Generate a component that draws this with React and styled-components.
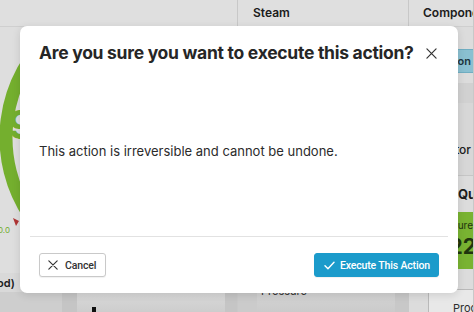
import styled, { createGlobalStyle } from "styled-components";

const GlobalStyle = createGlobalStyle`
  html, body {
    margin: 0;
    padding: 0;
    width: 474px;
    height: 312px;
    overflow: hidden;
    font-family: Inter, "Liberation Sans", sans-serif;
  }
`;

const Screen = styled.div`
  position: relative;
  width: 474px;
  height: 312px;
  overflow: hidden;
`;

const Dashboard = styled.div`
  display: grid;
  grid-template-columns: 238px 171px 1fr;
  height: 312px;
  background: #f2f2f2;
  color: #222;
`;

const Column = styled.div`
  display: flex;
  flex-direction: column;
  min-width: 0;
  border-right: 1px solid #dcdcdc;
  overflow: hidden;
`;

const HeaderCell = styled.div`
  height: 26px;
  flex: none;
  padding-left: ${(p) => p.$indent || 15}px;
  font-size: 12px;
  font-weight: 600;
  line-height: 26px;
  white-space: nowrap;
  background: #f6f6f6;
  border-bottom: 1px solid #e4e4e4;
`;

const GaugePanel = styled.div`
  flex: 1;
  display: flex;
  flex-direction: column;
  background: #f4f4f4;
`;

const StatusRow = styled.div`
  height: 22px;
  display: flex;
  align-items: center;
  font-size: 11px;
  font-weight: 600;
  background: #efefef;
  span {
    margin-left: -22px;
  }
`;

const CardStrip = styled.div`
  height: ${(p) => p.$h || 20}px;
  display: grid;
  grid-template-columns: ${(p) => p.$cols};
`;

const StripCell = styled.div`
  background: ${(p) => p.$bg};
  font-size: 11px;
  color: #333;
  padding: 0 0 0 4px;
  overflow: hidden;
  white-space: nowrap;
`;

const StripLabel = styled.div`
  margin-top: 14px;
`;

const Mark = styled.div`
  width: 4px;
  height: 6px;
  margin: 15px 0 0 11px;
  background: #111;
`;

const SteamBody = styled.div`
  flex: 1;
  background: #f3f3f3;
`;

const SideBody = styled.div`
  flex: 1;
  display: flex;
  flex-direction: column;
  background: #f2f2f2;
`;

const ToggleButton = styled.div`
  margin-top: 22px;
  height: 22px;
  background: #98d3e6;
  border: 1px solid #7cc0d6;
  border-right: none;
  font-size: 11px;
  font-weight: 600;
  line-height: 22px;
  text-align: right;
  padding-right: 2px;
  color: #1f3b45;
`;

const GreySection = styled.div`
  height: ${(p) => p.$h}px;
  background: ${(p) => p.$bg || "#e9e9e9"};
  border-bottom: ${(p) => (p.$line ? "1px solid #dadada" : "none")};
  display: flex;
  align-items: ${(p) => p.$align || "center"};
  justify-content: ${(p) => (p.$start ? "flex-start" : "flex-end")};
  padding: ${(p) => (p.$start ? "0 0 0 49px" : "0 2px 0 0")};
  font-size: ${(p) => p.$fs || 11}px;
  font-weight: ${(p) => p.$fw || 500};
  white-space: nowrap;
`;

const SectionText = styled.span`
  margin-bottom: 18px;
`;

const QualityBox = styled.div`
  height: 57px;
  margin-left: 12px;
  background: #86c537;
  display: flex;
  flex-direction: column;
  align-items: flex-end;
  color: #243a10;
  span:first-child {
    font-size: 10px;
    margin-top: 7px;
  }
  span:last-child {
    font-size: 21px;
    font-weight: 700;
    margin-top: 3px;
    margin-right: -3px;
  }
`;

const ProButton = styled.div`
  margin: 20px 0 0 19px;
  height: 26px;
  background: #fff;
  border: 1px solid #ccc;
  border-right: none;
  border-radius: 3px 0 0 0;
  font-size: 11px;
  line-height: 36px;
  padding-left: 24px;
  white-space: nowrap;
  color: #333;
`;

const Dim = styled.div`
  position: absolute;
  inset: 0;
  background: rgba(0, 0, 0, 0.09);
`;

const Modal = styled.div`
  position: absolute;
  left: 20px;
  top: 26px;
  width: 438px;
  height: 267px;
  display: flex;
  flex-direction: column;
  background: #fff;
  border-radius: 7px;
  box-shadow: 0 2px 8px rgba(0, 0, 0, 0.12);
`;

const ModalHeader = styled.div`
  display: flex;
  align-items: center;
  justify-content: space-between;
  padding: 15px 21px 0 19px;
`;

const Title = styled.h2`
  margin: 0;
  font-size: 17.5px;
  font-weight: 700;
  line-height: 24px;
  letter-spacing: -0.28px;
  white-space: nowrap;
  color: #262626;
`;

const CloseButton = styled.button`
  border: none;
  background: none;
  padding: 0;
  width: 11px;
  height: 11px;
  display: flex;
  color: #333;
  cursor: pointer;
`;

const ModalBody = styled.div`
  flex: 1;
  display: flex;
  align-items: center;
  padding: 0 19px;
  font-size: 13px;
  color: #2b2b2b;
`;

const Divider = styled.hr`
  margin: 0 10px;
  border: none;
  border-top: 1px solid #e2e2e2;
`;

const Footer = styled.div`
  display: flex;
  justify-content: space-between;
  align-items: center;
  padding: 16px 19px;
`;

const Button = styled.button`
  height: 24px;
  display: flex;
  align-items: center;
  gap: ${(p) => (p.$primary ? 5 : 7)}px;
  padding: 0 ${(p) => (p.$primary ? 8 : 9)}px 0 ${(p) => (p.$primary ? 9 : 8)}px;
  font-family: Roboto, "Liberation Sans", sans-serif;
  font-size: 10.5px;
  font-weight: 500;
  letter-spacing: -0.15px;
  border-radius: 3px;
  border: 1px solid ${(p) => (p.$primary ? "#1b9bcb" : "#c9c9c9")};
  background: ${(p) => (p.$primary ? "#1b9bcb" : "#fff")};
  color: ${(p) => (p.$primary ? "#fff" : "#333")};
  box-shadow: 0 1px 1px rgba(0, 0, 0, 0.06);
  cursor: pointer;
`;

function Gauge() {
  return (
    <svg width="238" height="246" viewBox="0 0 238 246">
      <path
        d="M 30 189 A 140 140 0 1 1 262 189"
        fill="none"
        stroke="#80c133"
        strokeWidth="13"
      />
      <text x="8" y="112" fontSize="40" fontWeight="700" fill="#80c133" fontFamily="Inter, sans-serif">
        92.4
      </text>
      <polygon points="13,191 19,194 16,199" fill="#c23a3a" />
      <text x="-2" y="206" fontSize="8" fill="#80c133" fontFamily="Inter, sans-serif">
        0.0
      </text>
    </svg>
  );
}

function XIcon({ size = 12, stroke = 1.4 }) {
  return (
    <svg width={size} height={size} viewBox="0 0 12 12">
      <path d="M1 1 L11 11 M11 1 L1 11" stroke="currentColor" strokeWidth={stroke} strokeLinecap="round" />
    </svg>
  );
}

function CheckIcon() {
  return (
    <svg width="11" height="9" viewBox="0 0 12 10">
      <path d="M1 5.2 L4.3 8.5 L11 1.5" fill="none" stroke="#fff" strokeWidth="1.6" strokeLinecap="round" strokeLinejoin="round" />
    </svg>
  );
}

export default function App() {
  return (
    <Screen>
      <GlobalStyle />
      <Dashboard>
        <Column>
          <HeaderCell />
          <GaugePanel>
            <Gauge />
          </GaugePanel>
          <StatusRow>
            <span>(Good)</span>
          </StatusRow>
          <CardStrip $cols="62px 15px 148px 13px">
            <StripCell $bg="#e3e3e3" />
            <StripCell $bg="#d9d9d9" />
            <StripCell $bg="linear-gradient(#efefef, #e2e2e2)">
              <Mark />
            </StripCell>
            <StripCell $bg="#d9d9d9" />
          </CardStrip>
        </Column>
        <Column>
          <HeaderCell>Steam</HeaderCell>
          <SteamBody />
          <CardStrip $cols="19px 138px 14px" $h={42}>
            <StripCell $bg="#e0e0e0" />
            <StripCell $bg="linear-gradient(#f2f2f2, #e0e0e0)">
              <StripLabel>Pressure</StripLabel>
            </StripCell>
            <StripCell $bg="#dcdcdc" />
          </CardStrip>
        </Column>
        <Column>
          <HeaderCell $indent={14}>Components</HeaderCell>
          <SideBody>
            <ToggleButton>Action</ToggleButton>
            <GreySection $h={10} $bg="#f2f2f2" />
            <GreySection $h={20} $bg="#e6e6e6" />
            <GreySection $h={72} $bg="#ededed" $line $fs={12} $align="flex-end">
              <SectionText>Motor</SectionText>
            </GreySection>
            <GreySection $h={36} $bg="#f2f2f2" $fs={13} $fw={700} $start>
              Quality
            </GreySection>
            <QualityBox>
              <span>Pressure</span>
              <span>22</span>
            </QualityBox>
            <ProButton>Process</ProButton>
          </SideBody>
        </Column>
      </Dashboard>
      <Dim />
      <Modal role="dialog">
        <ModalHeader>
          <Title>Are you sure you want to execute this action?</Title>
          <CloseButton aria-label="Close">
            <XIcon size={11} stroke={1.3} />
          </CloseButton>
        </ModalHeader>
        <ModalBody>This action is irreversible and cannot be undone.</ModalBody>
        <Divider />
        <Footer>
          <Button>
            <XIcon size={10} stroke={1.4} />
            Cancel
          </Button>
          <Button $primary>
            <CheckIcon />
            Execute This Action
          </Button>
        </Footer>
      </Modal>
    </Screen>
  );
}
